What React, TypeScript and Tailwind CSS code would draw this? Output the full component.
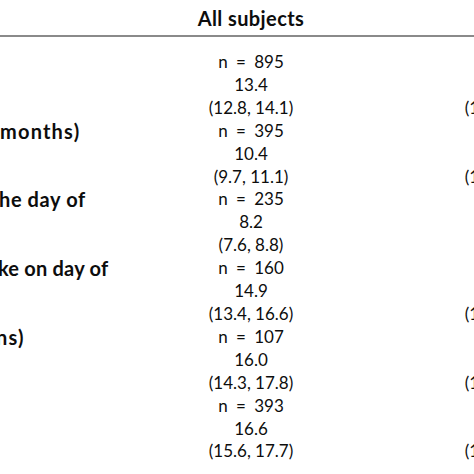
const groups = [
  { label: '', cls: '', n: 'n = 895', v: '13.4', ci: '(12.8, 14.1)', right: '(11.9, 14.3)' },
  { label: 'months)', cls: 'tracking-[1.2px]', n: 'n = 395', v: '10.4', ci: '(9.7, 11.1)', right: '(10.2, 12.0)' },
  { label: 'he day of', cls: 'tracking-[0.6px] -ml-[1px]', n: 'n = 235', v: '8.2', ci: '(7.6, 8.8)', right: '(6.9, 8.4)' },
  { label: 'ke on day of', cls: 'tracking-[0.2px] -ml-[2px]', n: 'n = 160', v: '14.9', ci: '(13.4, 16.6)', right: '(12.7, 16.2)' },
  { label: 'ns)', cls: 'tracking-[1.2px] -ml-[4px]', n: 'n = 107', v: '16.0', ci: '(14.3, 17.8)', right: '(13.9, 18.1)' },
  { label: '', cls: '', n: 'n = 393', v: '16.6', ci: '(15.6, 17.7)', right: '(14.8, 17.5)' },
];

export default function App() {
  return (
    <div className="w-[474px] h-[474px] overflow-hidden bg-white text-[#0d0d0d] font-['Lato','Open_Sans',sans-serif]">
      <div className="w-[580px]">
        <div className="grid grid-cols-[181px_140px_116px_140px] h-[35px] items-center">
          <div />
          <div className="text-center font-bold text-[20px] tracking-[0.4px] whitespace-nowrap">All subjects</div>
          <div />
          <div />
        </div>
        <div className="h-[2px] bg-[#8a8a8a]" />
        <div className="pt-[14px] grid grid-cols-[181px_140px_116px_140px] text-[17px] leading-[22.9px]">
          {groups.map((g, i) => (
            <div key={i} className="contents">
              <div className={`font-bold text-[20px] whitespace-nowrap ${g.cls}`}>{g.label}</div>
              <div className="text-center whitespace-nowrap">
                <div className="[word-spacing:4px]">{g.n}</div>
                <div>{g.v}</div>
                <div>{g.ci}</div>
              </div>
              <div />
              <div className="text-center whitespace-nowrap">
                <div>{g.n}</div>
                <div>{g.v}</div>
                <div>{g.right}</div>
              </div>
            </div>
          ))}
        </div>
      </div>
    </div>
  );
}
